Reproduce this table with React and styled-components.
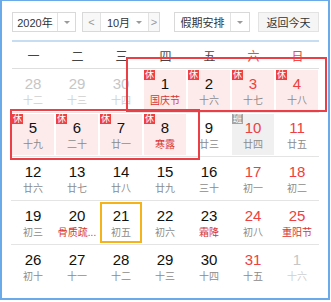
import React from 'react';
import styled, { createGlobalStyle } from 'styled-components';

const Global = createGlobalStyle`
  body {
    margin: 0;
    background: #fff;
    font-family: "Liberation Sans", "Noto Sans CJK SC", sans-serif;
  }
`;

const Page = styled.div`
  position: relative;
  width: 331px;
  height: 302px;
`;

const Calendar = styled.div`
  width: 330px;
  height: 300px;
  box-sizing: border-box;
  border: 2px solid #6aaae8;
  border-top-width: 1px;
  padding: 11px 9px 0 9px;
  background: #fff;
`;

const Toolbar = styled.div`
  display: flex;
  align-items: center;
  height: 20px;
  padding-left: 1px;
`;

const Box = styled.div`
  display: flex;
  height: 20px;
  box-sizing: border-box;
  border: 1px solid #d9d9d9;
  background: #fff;
  margin-left: ${p => p.gap || 0}px;
`;

const Part = styled.div`
  width: ${p => p.w}px;
  display: flex;
  align-items: center;
  justify-content: center;
  gap: 6px;
  font-size: 11px;
  color: #333;
  background: ${p => (p.shade ? '#f8f8f8' : '#fff')};
  & + & {
    border-left: 1px solid #e2e2e2;
  }
`;

const Caret = styled.span`
  width: 0;
  height: 0;
  border-left: 3px solid transparent;
  border-right: 3px solid transparent;
  border-top: 3px solid #9a9a9a;
`;

const Chevron = styled.span`
  font-size: 11px;
  color: #999;
`;

const TodayButton = styled.div`
  margin-left: 8px;
  width: 65px;
  height: 20px;
  box-sizing: border-box;
  border: 1px solid #e3e3e3;
  background: #f5f5f5;
  font-size: 11px;
  color: #333;
  display: flex;
  align-items: center;
  justify-content: center;
`;

const Divider = styled.div`
  margin: 8px 0 0 1px;
  width: 307px;
  height: 2px;
  background: #c7ddf2;
`;

const WeekHead = styled.div`
  display: grid;
  grid-template-columns: repeat(7, 44px);
  height: 26px;
  border-bottom: 1px solid #dedede;
  margin-left: 1px;
  width: 307px;
`;

const WeekDay = styled.div`
  display: flex;
  align-items: center;
  justify-content: center;
  font-size: 12px;
  margin-left: -1px;
  color: ${p => (p.red ? '#f04848' : '#444')};
`;

const Week = styled.div`
  display: grid;
  grid-template-columns: repeat(7, 44px);
  height: 44px;
  padding-top: 1px;
  box-sizing: border-box;
  border-bottom: ${p => (p.last ? 'none' : '1px solid #e4e4e4')};
`;

const Cell = styled.div`
  position: relative;
  margin: 0 1px;
  height: 41px;
  box-sizing: border-box;
  display: flex;
  flex-direction: column;
  align-items: center;
  background: ${p => (p.kind === 'rest' ? '#fdebec' : p.kind === 'work' ? '#f0f0f0' : 'transparent')};
  border: ${p => (p.today ? '2px solid #f5b31a' : 'none')};
  padding-top: ${p => (p.today ? 4 : 6)}px;
`;

const DayNum = styled.div`
  font-size: 15px;
  line-height: 16px;
  color: ${p => (p.tone === 'other' ? '#c6c6c6' : p.tone === 'red' ? '#ee4040' : '#111')};
`;

const Lunar = styled.div`
  margin-top: 3px;
  font-size: 10px;
  line-height: 12px;
  white-space: nowrap;
  color: ${p => (p.tone === 'other' ? '#cfcfcf' : p.tone === 'fest' ? '#d63636' : '#8c8c8c')};
`;

const Badge = styled.span`
  position: absolute;
  top: 0;
  left: 0;
  width: 11px;
  height: 10px;
  font-size: 9px;
  line-height: 10px;
  text-align: center;
  color: #fff;
  background: ${p => (p.work ? '#a3a3a3' : '#f04040')};
`;

const Mark = styled.div`
  position: absolute;
  left: ${p => p.x}px;
  top: ${p => p.y}px;
  width: ${p => p.w}px;
  height: ${p => p.h}px;
  box-sizing: border-box;
  border: 2px solid #ea3f46;
  pointer-events: none;
`;

// [day, lunar, flags]  o=other month, r=weekend red, f=festival, R=rest, W=work, T=today
const weeks = [
  [[28, '十二', 'o'], [29, '十三', 'o'], [30, '十四', 'o'], [1, '国庆节', 'fR'], [2, '十六', 'R'], [3, '十七', 'rR'], [4, '十八', 'rR']],
  [[5, '十九', 'R'], [6, '二十', 'R'], [7, '廿一', 'R'], [8, '寒露', 'fR'], [9, '廿三', ''], [10, '廿四', 'rW'], [11, '廿五', 'r']],
  [[12, '廿六', ''], [13, '廿七', ''], [14, '廿八', ''], [15, '廿九', ''], [16, '三十', ''], [17, '初一', 'r'], [18, '初二', 'r']],
  [[19, '初三', ''], [20, '骨质疏...', 'f'], [21, '初五', 'T'], [22, '初六', ''], [23, '霜降', 'f'], [24, '初八', 'r'], [25, '重阳节', 'rf']],
  [[26, '初十', ''], [27, '十一', ''], [28, '十二', ''], [29, '十三', ''], [30, '十四', ''], [31, '十五', 'r'], [1, '十六', 'o']],
];

const days = ['一', '二', '三', '四', '五', '六', '日'];

export default function App() {
  return (
    <Page>
      <Global />
      <Calendar>
        <Toolbar>
          <Box>
            <Part w={44}>2020年</Part>
            <Part w={17}><Caret /></Part>
          </Box>
          <Box gap={6}>
            <Part w={17} shade><Chevron>&lt;</Chevron></Part>
            <Part w={47}>10月 <Caret /></Part>
            <Part w={10} shade><Chevron>&gt;</Chevron></Part>
          </Box>
          <Box gap={14}>
            <Part w={55}>假期安排</Part>
            <Part w={18}><Caret /></Part>
          </Box>
          <TodayButton>返回今天</TodayButton>
        </Toolbar>
        <Divider />
        <WeekHead>
          {days.map((d, i) => <WeekDay key={d} red={i > 4}>{d}</WeekDay>)}
        </WeekHead>
        {weeks.map((week, wi) => (
          <Week key={wi} last={wi === weeks.length - 1}>
            {week.map(([n, lunar, f], i) => {
              const other = f.includes('o');
              const kind = f.includes('R') ? 'rest' : f.includes('W') ? 'work' : '';
              return (
                <Cell key={i} kind={kind} today={f.includes('T')}>
                  {kind === 'rest' && <Badge>休</Badge>}
                  {kind === 'work' && <Badge work>班</Badge>}
                  <DayNum tone={other ? 'other' : f.includes('r') ? 'red' : ''}>{n}</DayNum>
                  <Lunar tone={other ? 'other' : f.includes('f') ? 'fest' : ''}>{lunar}</Lunar>
                </Cell>
              );
            })}
          </Week>
        ))}
      </Calendar>
      <Mark x={126} y={57} w={201} h={55} />
      <Mark x={10} y={109} w={190} h={51} />
    </Page>
  );
}
